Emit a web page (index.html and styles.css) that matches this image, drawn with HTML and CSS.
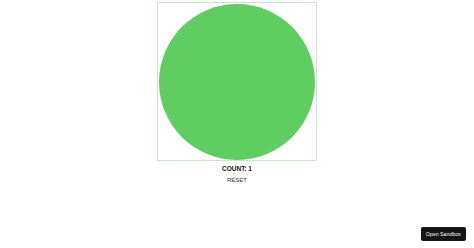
FILE: index.html
```html
<!DOCTYPE html>
<html>
<head>
<meta charset="utf-8">
<link rel="stylesheet" href="styles.css">
</head>
<body>
<div class="app">
  <div class="stage">
    <svg width="158" height="157" viewBox="0 0 158 157"><circle cx="79" cy="79" r="78" fill="#5fcd62"/></svg>
  </div>
  <div class="count">COUNT: 1</div>
  <button class="reset">RESET</button>
</div>
<a class="sandbox">Open Sandbox</a>
</body>
</html>
```
FILE: styles.css
```css
html, body { margin: 0; padding: 0; background: #fff; }
body { font-family: "Liberation Sans", Arial, sans-serif; }
.app { display: flex; flex-direction: column; align-items: center; padding-top: 2px; }
.stage { width: 160px; height: 159px; box-sizing: border-box; border: 1px solid #c9e6c9; display: flex; overflow: hidden; }
.stage svg { display: block; }
.count { font-size: 6.5px; font-weight: bold; color: #111; margin-top: 4px; line-height: 8px; }
.reset { font-family: inherit; font-size: 6px; color: #3a3a3a; background: none; border: none; padding: 0; margin-top: 3px; line-height: 8px; }
.sandbox { position: fixed; right: 8px; bottom: 7px; background: #151515; color: #fff; font-size: 5.3px; padding: 3px 5px; border-radius: 2px; line-height: 8px; }
```
